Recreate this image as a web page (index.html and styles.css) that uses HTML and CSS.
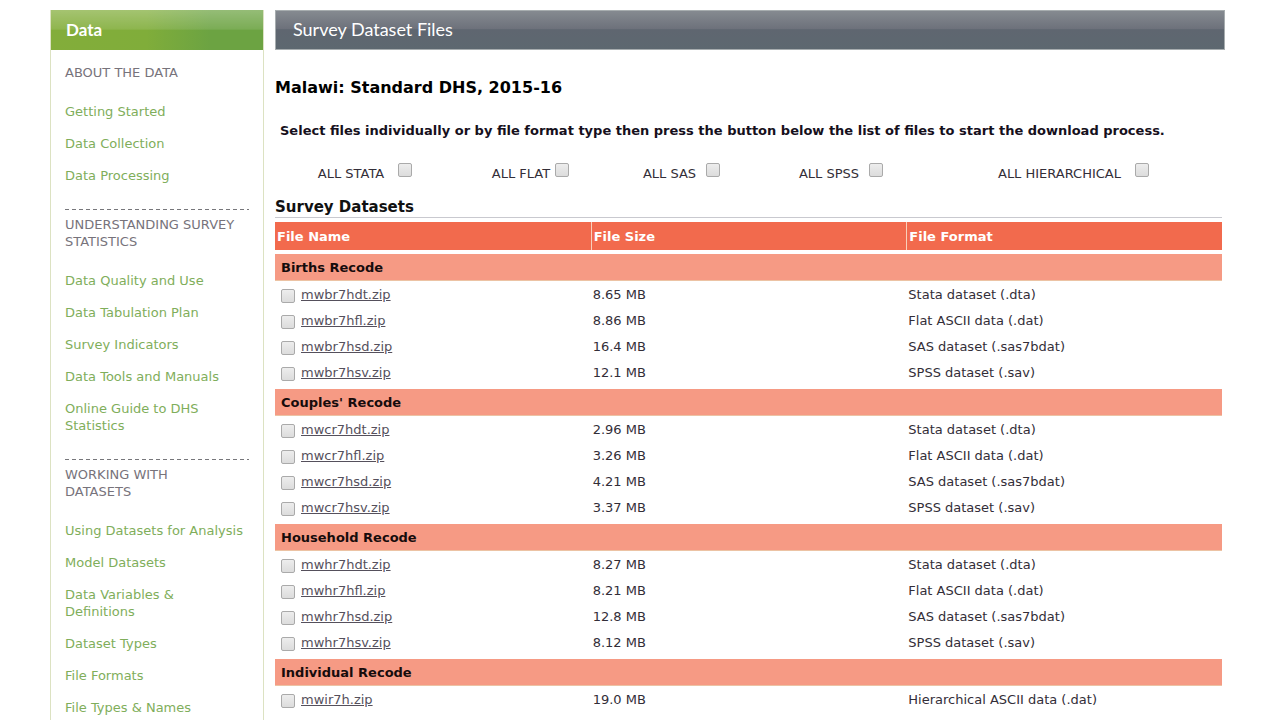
FILE: index.html
```
<!DOCTYPE html>
<html lang="en">
<head>
<meta charset="utf-8">
<title>Survey Dataset Files</title>
<link rel="stylesheet" href="styles.css">
</head>
<body>
<div class="page">
  <aside class="sidebar">
    <h2 class="side-title">Data</h2>
    <nav class="side-nav">
      <section class="group">
        <h3>ABOUT THE DATA</h3>
        <ul>
          <li><a href="#">Getting Started</a></li>
          <li><a href="#">Data Collection</a></li>
          <li><a href="#">Data Processing</a></li>
        </ul>
      </section>
      <section class="group">
        <h3>UNDERSTANDING SURVEY STATISTICS</h3>
        <ul>
          <li><a href="#">Data Quality and Use</a></li>
          <li><a href="#">Data Tabulation Plan</a></li>
          <li><a href="#">Survey Indicators</a></li>
          <li><a href="#">Data Tools and Manuals</a></li>
          <li><a href="#">Online Guide to DHS Statistics</a></li>
        </ul>
      </section>
      <section class="group">
        <h3>WORKING WITH DATASETS</h3>
        <ul>
          <li><a href="#">Using Datasets for Analysis</a></li>
          <li><a href="#">Model Datasets</a></li>
          <li><a href="#">Data Variables &amp; Definitions</a></li>
          <li><a href="#">Dataset Types</a></li>
          <li><a href="#">File Formats</a></li>
          <li><a href="#">File Types &amp; Names</a></li>
        </ul>
      </section>
    </nav>
  </aside>
  <main class="main">
    <h1 class="banner">Survey Dataset Files</h1>
    <div class="content">
      <h2 class="survey">Malawi: Standard DHS, 2015-16</h2>
      <p class="hint">Select files individually or by file format type then press the button below the list of files to start the download process.</p>
      <div class="filters">
        <label class="wide">ALL STATA <input type="checkbox"></label>
        <label class="tight">ALL FLAT <input type="checkbox"></label>
        <label>ALL SAS <input type="checkbox"></label>
        <label>ALL SPSS <input type="checkbox"></label>
        <label class="wide">ALL HIERARCHICAL <input type="checkbox"></label>
      </div>
      <h3 class="caption">Survey Datasets</h3>
      <table class="files">
        <thead>
          <tr><th scope="col">File Name</th><th scope="col">File Size</th><th scope="col">File Format</th></tr>
        </thead>
        <tbody>
          <tr class="recode"><th colspan="3" scope="rowgroup">Births Recode</th></tr>
          <tr><td><div class="file"><input type="checkbox" aria-label="mwbr7hdt.zip"><a href="#">mwbr7hdt.zip</a></div></td><td>8.65 MB</td><td>Stata dataset (.dta)</td></tr>
          <tr><td><div class="file"><input type="checkbox" aria-label="mwbr7hfl.zip"><a href="#">mwbr7hfl.zip</a></div></td><td>8.86 MB</td><td>Flat ASCII data (.dat)</td></tr>
          <tr><td><div class="file"><input type="checkbox" aria-label="mwbr7hsd.zip"><a href="#">mwbr7hsd.zip</a></div></td><td>16.4 MB</td><td>SAS dataset (.sas7bdat)</td></tr>
          <tr><td><div class="file"><input type="checkbox" aria-label="mwbr7hsv.zip"><a href="#">mwbr7hsv.zip</a></div></td><td>12.1 MB</td><td>SPSS dataset (.sav)</td></tr>
        </tbody>
        <tbody>
          <tr class="recode"><th colspan="3" scope="rowgroup">Couples' Recode</th></tr>
          <tr><td><div class="file"><input type="checkbox" aria-label="mwcr7hdt.zip"><a href="#">mwcr7hdt.zip</a></div></td><td>2.96 MB</td><td>Stata dataset (.dta)</td></tr>
          <tr><td><div class="file"><input type="checkbox" aria-label="mwcr7hfl.zip"><a href="#">mwcr7hfl.zip</a></div></td><td>3.26 MB</td><td>Flat ASCII data (.dat)</td></tr>
          <tr><td><div class="file"><input type="checkbox" aria-label="mwcr7hsd.zip"><a href="#">mwcr7hsd.zip</a></div></td><td>4.21 MB</td><td>SAS dataset (.sas7bdat)</td></tr>
          <tr><td><div class="file"><input type="checkbox" aria-label="mwcr7hsv.zip"><a href="#">mwcr7hsv.zip</a></div></td><td>3.37 MB</td><td>SPSS dataset (.sav)</td></tr>
        </tbody>
        <tbody>
          <tr class="recode"><th colspan="3" scope="rowgroup">Household Recode</th></tr>
          <tr><td><div class="file"><input type="checkbox" aria-label="mwhr7hdt.zip"><a href="#">mwhr7hdt.zip</a></div></td><td>8.27 MB</td><td>Stata dataset (.dta)</td></tr>
          <tr><td><div class="file"><input type="checkbox" aria-label="mwhr7hfl.zip"><a href="#">mwhr7hfl.zip</a></div></td><td>8.21 MB</td><td>Flat ASCII data (.dat)</td></tr>
          <tr><td><div class="file"><input type="checkbox" aria-label="mwhr7hsd.zip"><a href="#">mwhr7hsd.zip</a></div></td><td>12.8 MB</td><td>SAS dataset (.sas7bdat)</td></tr>
          <tr><td><div class="file"><input type="checkbox" aria-label="mwhr7hsv.zip"><a href="#">mwhr7hsv.zip</a></div></td><td>8.12 MB</td><td>SPSS dataset (.sav)</td></tr>
        </tbody>
        <tbody>
          <tr class="recode"><th colspan="3" scope="rowgroup">Individual Recode</th></tr>
          <tr><td><div class="file"><input type="checkbox" aria-label="mwir7h.zip"><a href="#">mwir7h.zip</a></div></td><td>19.0 MB</td><td>Hierarchical ASCII data (.dat)</td></tr>
        </tbody>
      </table>
    </div>
  </main>
</div>
</body>
</html>
```
FILE: styles.css
```
* { box-sizing: border-box; }
body {
  margin: 0;
  background: #fff;
  color: #332e38;
  font: 13px/17px Verdana, "DejaVu Sans", sans-serif;
}
h1, h2, h3, p, ul { margin: 0; padding: 0; }
ul { list-style: none; }
a { text-decoration: none; }

.page {
  display: flex;
  gap: 11px;
  min-height: 100vh;
  padding: 10px 55px 0 50px;
}

.sidebar {
  flex: 0 0 214px;
  border: 1px solid #dce2c2;
  border-width: 0 1px;
}
.side-title, .banner {
  height: 40px;
  color: #fff;
  font: 400 18px/40px Lato, sans-serif;
}
.side-title {
  padding-left: 15px;
  font-size: 17px;
  font-weight: 700;
  background:
    linear-gradient(rgba(255, 255, 255, 0.28), rgba(255, 255, 255, 0.1) 48%, transparent 50%),
    linear-gradient(90deg, #83ad3a, #80ad3a 45%, #6ca342 75%);
}
.side-nav { padding: 14px 14px 0; }
.group h3 {
  max-width: 172px;
  margin-bottom: 22px;
  color: #77737b;
  font-size: 13px;
  font-weight: 400;
}
.group li { max-width: 180px; margin-bottom: 15px; color: #7fae5b; }
.group a { color: inherit; }
.group + .group { padding-top: 10px; }
.group + .group::before {
  content: "";
  display: block;
  height: 1px;
  margin-bottom: 6px;
  background: repeating-linear-gradient(90deg, #77777b 0 4px, transparent 4px 7px);
}

.main { flex: 1; min-width: 0; }
.banner {
  padding-left: 17px;
  border: 1px solid #a7adaf;
  line-height: 36px;
  background: linear-gradient(#858a90, #6d717b 47%, #5f6670 49%, #5d6870);
}
.content { padding: 28px 3px 0 0; }
.survey { color: #000; font-size: 16px; line-height: 20px; }
.hint {
  margin-top: 24px;
  padding-left: 5px;
  color: #16101c;
  font-weight: 700;
}
.filters {
  display: grid;
  grid-template-columns: 180fr 151fr 151fr 168fr 297fr;
  margin-top: 24px;
  height: 24px;
}
.filters label {
  display: flex;
  justify-content: center;
  align-items: flex-start;
  gap: 10px;
  line-height: 22px;
}
.filters input { margin-top: 1px; }
.filters .tight { gap: 5px; }
.filters .wide { gap: 14px; }

input[type="checkbox"] {
  appearance: none;
  flex: none;
  width: 14px;
  height: 14px;
  margin: 0;
  border: 1px solid #aaa;
  border-radius: 2px;
  background: linear-gradient(#ededed, #dcdcdc);
}
input[type="checkbox"]:checked { background: #777; }

.caption {
  margin-top: 11px;
  padding-bottom: 1px;
  border-bottom: 1px solid #c9c9cf;
  color: #111;
  font-size: 15px;
  line-height: 18px;
}
.files {
  width: 100%;
  margin-top: 4px;
  border-collapse: separate;
  border-spacing: 0;
  table-layout: fixed;
}
.files th { padding: 0; text-align: left; }
.files thead th {
  height: 28px;
  padding-left: 2px;
  border-left: 1px solid #f8d0bb;
  background: #f26a4d;
  color: #fff;
}
.files thead th:first-child { border-left: 0; }
.files tbody::before {
  content: "";
  display: table-row;
  height: 4px;
}
.recode th {
  height: 27px;
  border-bottom: 1px solid #ecc3a4;
  background: #f69a84;
  color: #160c0c;
}
.files .recode th { padding-left: 6px; }
.files td { height: 26px; padding: 0 0 0 2px; }
.files td:first-child { padding-left: 6px; }
.file { display: flex; align-items: center; gap: 6px; }
.file input { margin-top: 3px; }
.file a { color: #55505c; text-decoration: underline; }
```
